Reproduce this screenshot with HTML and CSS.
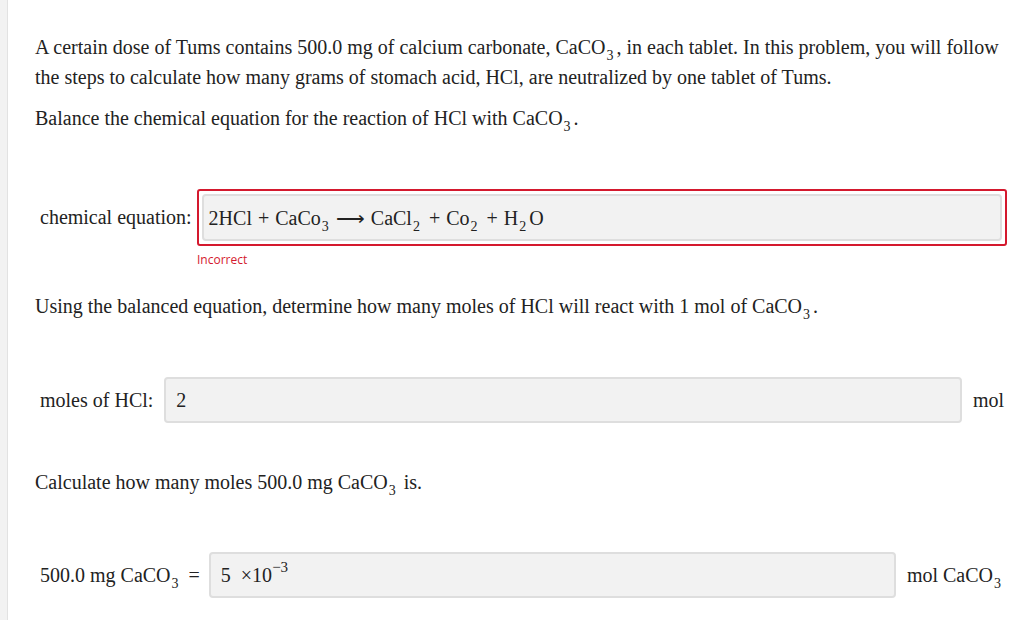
FILE: index.html
```html
<!DOCTYPE html>
<html>
<head>
<meta charset="UTF-8">
<title>Tums</title>
<link rel="stylesheet" href="styles.css">
</head>
<body>
<div class="page">
	<div class="question">
		<p class="text first">A certain dose of Tums contains 500.0 mg of calcium carbonate, CaCO<sub>3</sub>, in each tablet. In this problem, you will follow the steps to calculate how many grams of stomach acid, HCl, are neutralized by one tablet of Tums.</p>
		<p class="text">Balance the chemical equation for the reaction of HCl with CaCO<sub>3</sub>.</p>

		<!-- 화학식 입력 -->
		<div class="row row-eq">
			<label class="label">chemical equation:</label>
			<div class="wrong">
				<div class="field"><span>2HCl<span class="op">+</span>CaCo<sub>3</sub><span class="arrow">&#x27F6;</span>CaCl<sub>2</sub><span class="op">+</span>Co<sub>2</sub><span class="op">+</span>H<sub>2</sub>O</span></div>
			</div>
		</div>
		<div class="feedback">Incorrect</div>

		<p class="text step">Using the balanced equation, determine how many moles of HCl will react with 1 mol of CaCO<sub>3</sub>.</p>

		<div class="row row-mol">
			<label class="label">moles of HCl:</label>
			<div class="field grow"><span>2</span></div>
			<span class="unit">mol</span>
		</div>

		<p class="text step2">Calculate how many moles 500.0 mg CaCO<sub>3</sub> is.</p>

		<div class="row row-mol">
			<label class="label last">500.0 mg CaCO<sub>3</sub><span class="eq">=</span></label>
			<div class="field grow"><span>5 &nbsp;&times;10<sup>&minus;3</sup></span></div>
			<span class="unit">mol CaCO<sub>3</sub></span>
		</div>
	</div>
</div>
</body>
</html>
```

FILE: styles.css
```css
body{
	margin:0;
	font-family:"Liberation Serif", "Times New Roman", serif;
	color:#222;
	background:#fff;
}
.page{
	border-left:7px solid #f2f2f2;
	box-shadow:inset 1px 0 0 #e2e2e2;
	min-height:620px;
}
.question{
	padding:32px 17px 0 28px;
}
.text{
	margin:0 0 11px 0;
	font-size:20px;
	line-height:30px;
}
sub{
	font-size:14px;
	vertical-align:-6px;
	line-height:0;
	margin-left:1px;
	margin-right:3px;
}
sup{
	font-size:15px;
	vertical-align:10px;
	line-height:0;
}
.row{
	display:flex;
	align-items:center;
	font-size:20px;
	margin-left:5px;
}
.row-eq{
	margin-top:56px;
}
.label{
	white-space:nowrap;
	margin-right:5px;
}
.row-mol .label{
	margin-right:11px;
}
.row-mol .label.last{
	margin-right:9px;
}
.wrong{
	flex:1;
	border:2px solid #d4192e;
	border-radius:3px;
	padding:3px;
}
.field{
	background:#f2f2f2;
	border:2px solid #dedede;
	border-radius:4px;
	box-sizing:border-box;
	height:47px;
	display:flex;
	align-items:center;
	padding:0 5px;
	white-space:nowrap;
}
.row-mol .field{
	height:46px;
	padding:0 10px;
}
.op{
	margin:0 6px;
}
.arrow{
	margin:0 6px 0 4px;
}
.grow{
	flex:1;
}
.unit{
	margin-left:11px;
	margin-right:3px;
	white-space:nowrap;
}
.eq{
	margin-left:7px;
}
.feedback{
	font-family:"Open Sans", "Liberation Sans", sans-serif;
	font-size:12px;
	color:#d4192e;
	margin:5px 0 0 162px;
	line-height:18px;
}
.step{
	margin-top:22px;
	margin-bottom:0;
}
.step + .row{
	margin-top:56px;
}
.step2{
	margin-top:44px;
	margin-bottom:0;
}
.step2 + .row{
	margin-top:55px;
}
```
